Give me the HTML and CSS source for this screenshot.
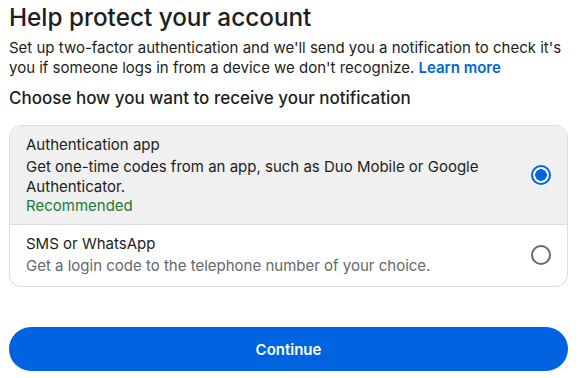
FILE: index.html
```html
<!DOCTYPE html>
<html>
<head>
<meta charset="utf-8">
<link rel="stylesheet" href="styles.css">
</head>
<body>
<main class="page">
  <h1 class="title">Help protect your account</h1>
  <p class="intro">Set up two-factor authentication and we'll send you a notification to check it's you if someone logs in from a device we don't recognize. <a class="link" href="#">Learn more</a></p>
  <h2 class="subtitle">Choose how you want to receive your notification</h2>
  <div class="options">
    <label class="option selected">
      <div class="option-text">
        <div class="option-name">Authentication app</div>
        <div class="option-desc">Get one-time codes from an app, such as Duo Mobile or Google Authenticator.</div>
        <div class="option-tag">Recommended</div>
      </div>
      <span class="radio checked"></span>
    </label>
    <label class="option">
      <div class="option-text">
        <div class="option-name">SMS or WhatsApp</div>
        <div class="option-desc muted">Get a login code to the telephone number of your choice.</div>
      </div>
      <span class="radio"></span>
    </label>
  </div>
  <button class="continue">Continue</button>
</main>
</body>
</html>
```
FILE: styles.css
```css
* { box-sizing: border-box; }
html, body { margin: 0; padding: 0; background: #fff; }
body {
  font-family: Inter, "Noto Sans", sans-serif;
  color: #1c1e21;
}
.page {
  padding: 0 13px 0 9px;
  display: flex;
  flex-direction: column;
}
.title {
  margin: 2px 0 0;
  font-size: 24.3px;
  line-height: 30px;
  font-weight: 500;
}
.intro {
  margin: 6px 0 0;
  font-size: 15px;
  line-height: 20px;
}
.link {
  color: #0064e0;
  font-weight: 600;
  text-decoration: none;
}
.subtitle {
  margin: 9px 0 0;
  font-size: 17px;
  line-height: 22px;
  font-weight: 500;
}
.options {
  margin-top: 16px;
  border: 1px solid #dadde1;
  border-radius: 12px;
  overflow: hidden;
}
.option {
  display: flex;
  align-items: center;
  padding: 9px 16px 10px 16px;
  gap: 16px;
}
.option + .option { border-top: 1px solid #dadde1; }
.option.selected { background: #f0f0f0; }
.option-text { flex: 1; font-size: 15px; line-height: 20px; }
.option-name { margin-bottom: 2px; }
.option-desc.muted { color: #65686c; }
.option-tag { color: #1e7b33; line-height: 17px; }
.radio {
  width: 20px;
  height: 20px;
  border-radius: 50%;
  border: 2px solid #65686c;
  flex: none;
}
.radio.checked {
  border-color: #0064e0;
  background: radial-gradient(circle, #0064e0 0 5.5px, transparent 6px);
}
.continue {
  margin-top: 40px;
  height: 44px;
  border: none;
  border-radius: 22px;
  background: #0064e0;
  color: #fff;
  font-family: inherit;
  font-size: 15px;
  font-weight: 600;
}
```
